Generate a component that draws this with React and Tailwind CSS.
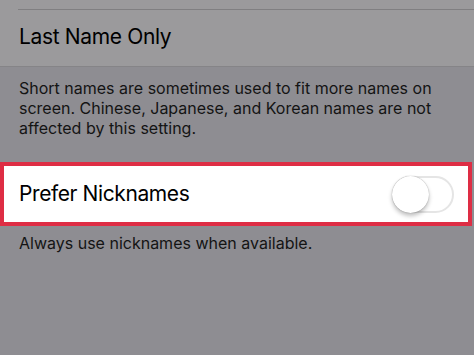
import React, { useState } from "react";

const font = { fontFamily: "Inter, 'Liberation Sans', sans-serif" };

const Toggle = ({ on, onChange }) => (
  <button
    onClick={() => onChange(!on)}
    className={`relative w-[62px] h-[37px] rounded-full border-2 ${on ? "bg-[#4cd964] border-[#4cd964]" : "bg-white border-[#e5e5e5]"}`}
  >
    <span
      className={`absolute top-[-2px] h-[37px] w-[37px] rounded-full bg-white shadow-[0_3px_4px_rgba(0,0,0,0.25),0_0_1px_rgba(0,0,0,0.4)] ${on ? "left-[23px]" : "left-[-2px]"}`}
    />
  </button>
);

export default function App() {
  const [prefer, setPrefer] = useState(false);

  return (
    <div className="w-[474px] h-[355px] bg-[#8e8d92] overflow-hidden text-black" style={font}>
      {/* Last Name Only cell */}
      <div className="bg-[#9b9a9c] h-[66px] pt-[9px]">
        <div className="ml-[18px] border-t border-[#807f81] h-[56px] flex items-center pl-[1px] pb-[2px]">
          <span className="text-[21px] tracking-[-0.35px]">Last Name Only</span>
        </div>
      </div>
      <div className="h-px bg-[#858487]" />

      {/* Footer */}
      <p className="px-[19px] pt-[11px] text-[16px] leading-[20px] text-[#141414]">
        Short names are sometimes used to fit more names on screen. Chinese, Japanese, and Korean names are not affected by this setting.
      </p>

      {/* Highlighted cell */}
      <div className="mt-[24px] w-[472px] h-[64px] border-4 border-[#de2d44] bg-white flex items-center justify-between pl-[15px] pr-[14px]">
        <span className="text-[21px] tracking-[-0.4px]">Prefer Nicknames</span>
        <Toggle on={prefer} onChange={setPrefer} />
      </div>

      <p className="px-[19px] pt-[7px] text-[16px] leading-[20px] text-[#141414]">
        Always use nicknames when available.
      </p>
    </div>
  );
}
